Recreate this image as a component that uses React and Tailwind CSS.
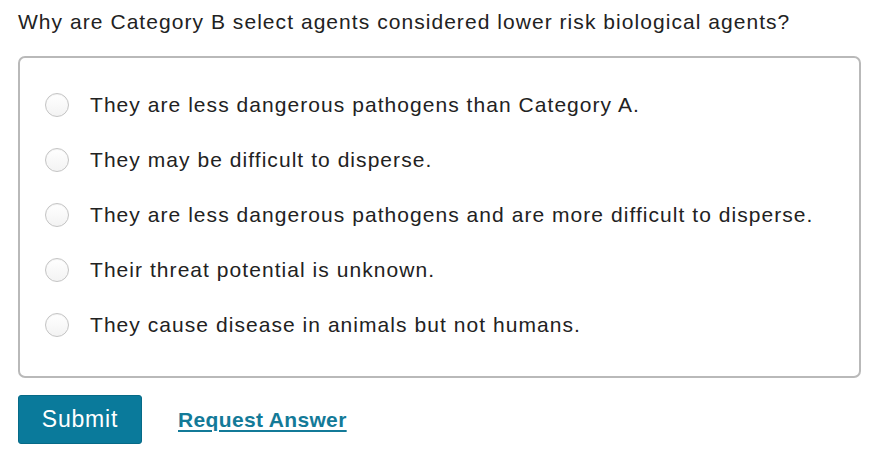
export default function App() {
  const options = [
    "They are less dangerous pathogens than Category A.",
    "They may be difficult to disperse.",
    "They are less dangerous pathogens and are more difficult to disperse.",
    "Their threat potential is unknown.",
    "They cause disease in animals but not humans.",
  ];
  return (
    <div className="w-[884px] h-[472px] bg-white text-[#222] font-['Liberation_Sans',Arial,sans-serif]">
      <div className="pl-[18px] pt-[8px] text-[21px] leading-[28px] tracking-[1.05px]">
        Why are Category B select agents considered lower risk biological agents?
      </div>
      <div className="ml-[18px] mt-[20px] w-[843px] h-[322px] border-2 border-[#b9b9b9] rounded-[7px] pl-[25px] pt-[19px]">
        {options.map((o) => (
          <div key={o} className="h-[55px] flex items-center">
            <span className="w-[24px] h-[24px] rounded-full border border-[#c4c4c4] bg-gradient-to-b from-white to-[#f3f3f3] shadow-[inset_0_1px_1px_rgba(0,0,0,0.05)] shrink-0" />
            <span className="ml-[21px] text-[21px] leading-[28px] tracking-[1.05px]">{o}</span>
          </div>
        ))}
      </div>
      <div className="flex items-center pl-[18px] mt-[17px]">
        <button className="w-[124px] h-[49px] bg-[#0a7a9b] border border-[#066a87] rounded-[3px] text-white text-[23px] tracking-[0.8px] font-['Liberation_Sans',Arial,sans-serif]">
          Submit
        </button>
        <a href="#" className="ml-[36px] text-[21px] font-bold text-[#137a98] underline underline-offset-[3px] tracking-[0.35px]">
          Request Answer
        </a>
      </div>
    </div>
  );
}
